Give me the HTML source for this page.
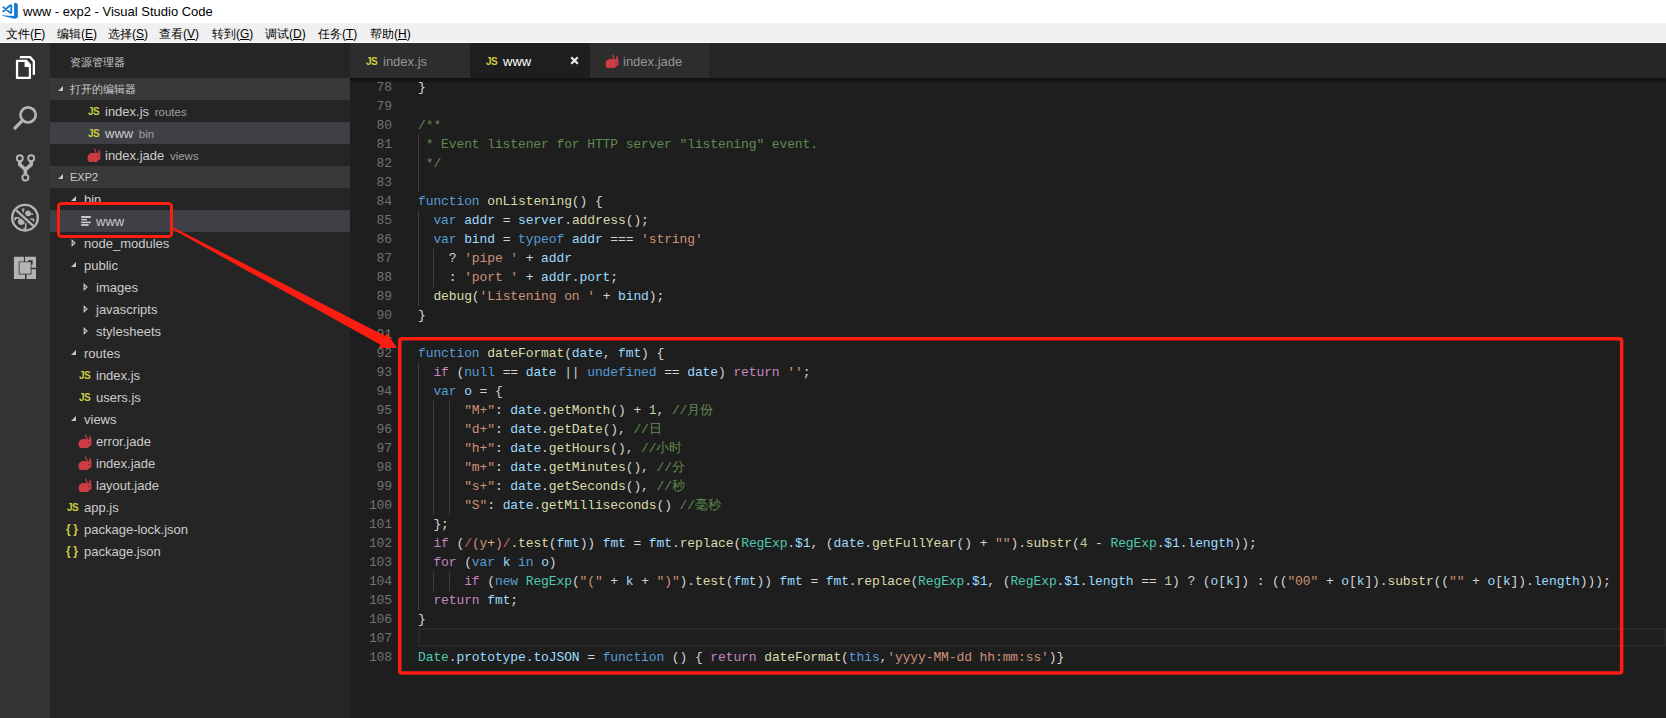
<!DOCTYPE html>
<html><head><meta charset="utf-8">
<style>
*{box-sizing:border-box;margin:0;padding:0}
html,body{width:1666px;height:718px;overflow:hidden;background:#1e1e1e;font-family:"Liberation Sans",sans-serif}
.a{position:absolute}
#title{left:0;top:0;width:1666px;height:23px;background:#fff}
#ttext{left:23px;top:4px;font-size:13px;color:#000;white-space:nowrap}
#menu{left:0;top:23px;width:1666px;height:19px;background:#f0f0f0}
#sep{left:0;top:42px;height:1px;background:#fff;width:1666px}
.mi{top:3px;font-size:12px;color:#000;white-space:nowrap}
.mi u{text-decoration:underline}
#act{left:0;top:43px;width:50px;height:675px;background:#333333}
#side{left:50px;top:43px;width:300px;height:675px;background:#252526;color:#cccccc;font-size:13px}
#tabs{left:350px;top:43px;width:1316px;height:35px;background:#252526}
#editor{left:350px;top:78px;width:1316px;height:640px;background:#1e1e1e}
.row{position:absolute;left:0;width:300px;height:22px;line-height:22px;white-space:nowrap}
.row .tx{position:absolute;top:1px}
.sel{background:#3f3f46}
.hdr{background:#383838;font-size:11px}
.desc{color:#a0a0a0;font-size:11.5px;margin-left:2px}
.js{position:absolute;top:1px;font-weight:bold;font-size:10px;color:#cbcb41;letter-spacing:-0.6px}
.tri{position:absolute;top:8px;width:0;height:0}
.tab{position:absolute;top:0;width:120px;height:35px;line-height:35px;font-size:13px;white-space:nowrap}
.bun{position:absolute;top:0}
.fic{position:absolute;top:0}
.otr{position:absolute;top:6px}
.br{position:absolute;top:-0.5px;font-weight:bold;font-size:12px;color:#cbcb41;letter-spacing:-0.4px}
.ln{position:absolute;left:0;width:42px;height:19px;line-height:19px;text-align:right;color:#727272;font-family:"Liberation Mono",monospace;font-size:13px;letter-spacing:-0.11px}
.cl{position:absolute;left:68px;height:19px;line-height:19px;white-space:pre;color:#d4d4d4;font-family:"Liberation Mono",monospace;font-size:13px;letter-spacing:-0.11px}
.gd{position:absolute;width:1px;background:#404040}
.curl{position:absolute;left:68px;width:1248px;height:19px;border:2px solid #282828}
.k{color:#569cd6}.c{color:#c586c0}.f{color:#dcdcaa}.v{color:#9cdcfe}.s{color:#ce9178}.cm{color:#608b4e}.n{color:#b5cea8}.t{color:#4ec9b0}.r{color:#d16969}.rx{color:#d7ba7d}
.shd{position:absolute;left:0;top:0;width:1316px;height:6px;background:linear-gradient(#0f0f0f,rgba(30,30,30,0))}
</style></head><body>
<div id="title" class="a">
  <svg class="a" style="left:0;top:0" width="23" height="23" viewBox="0 0 23 23">
    <path d="M14.1 3.1 L15.6 3.1 L17.8 4.1 L17.8 17.4 L14.6 18.8 L13.2 18.6 L2.2 15.8 L2.1 15.2 L14.1 16 Z" fill="#0f78d4"/>
    <path d="M3.3 7.1 L10.3 12.9 L11.3 12.6 L11.3 5.6 L10.3 5.3 L3.3 11.3" fill="none" stroke="#0f78d4" stroke-width="1.8" stroke-linejoin="round" stroke-linecap="round"/>
  </svg>
  <div id="ttext" class="a">www - exp2 - Visual Studio Code</div>
</div>
<div id="menu" class="a">
  <div class="a mi" style="left:6px">文件(<u>F</u>)</div>
  <div class="a mi" style="left:57px">编辑(<u>E</u>)</div>
  <div class="a mi" style="left:108px">选择(<u>S</u>)</div>
  <div class="a mi" style="left:159px">查看(<u>V</u>)</div>
  <div class="a mi" style="left:212px">转到(<u>G</u>)</div>
  <div class="a mi" style="left:265px">调试(<u>D</u>)</div>
  <div class="a mi" style="left:318px">任务(<u>T</u>)</div>
  <div class="a mi" style="left:370px">帮助(<u>H</u>)</div>
</div>
<div id="sep" class="a"></div>
<div id="act" class="a"></div>
<svg class="a" style="left:0;top:0" width="50" height="718" viewBox="0 0 50 718">
  <path fill="#ffffff" fill-rule="evenodd" d="M16.9 59.8 L26.8 59.8 L31 64.6 L31 78 Q31 79 30 79 L16.9 79 Q15.9 79 15.9 78 L15.9 60.8 Q15.9 59.8 16.9 59.8 Z M18.2 62 L24.6 62 L24.6 67.1 L28.8 67.1 L28.8 76.8 L18.2 76.8 Z"/>
  <path fill="#ffffff" d="M20.8 56 L30.7 56 L35 60.9 L35 74 Q35 75 34 75 L32.7 75 L32.7 61.8 L29.6 58.2 L19.8 58.2 L19.8 57 Q19.8 56 20.8 56 Z"/>
  <g stroke="#b4b4b4" fill="none">
    <circle cx="28.1" cy="114.9" r="7.6" stroke-width="2.7"/>
    <path d="M22.6 120.4 L15 128" stroke-width="3.2" stroke-linecap="round"/>
    <circle cx="19.8" cy="158.3" r="3" stroke-width="1.9"/>
    <circle cx="31.2" cy="158.3" r="3" stroke-width="1.9"/>
    <circle cx="25.4" cy="177.6" r="3" stroke-width="1.9"/>
    <path d="M19.8 161.2 L19.8 164.6 L25.4 169.5 L31.2 164.6 L31.2 161.2 M25.4 169 L25.4 174.6" stroke-width="3.6" stroke-linejoin="round"/>
    </g>
  <g fill="#b4b4b4">
    <circle cx="28" cy="213.4" r="2.9"/>
    <circle cx="21.3" cy="221.6" r="3.4"/>
  </g>
  <path d="M23 209.2 L23 212.5 M21.8 209.4 L24.5 209.4 M30.2 214 L33.3 214 M28 219.2 L33.5 219.2 L33.5 221.8 M14.5 217.9 L19.5 217.9 M15.2 217.9 L15.2 220.5 M25.7 222.5 L25.7 228.5 L23.5 228.5" stroke="#b4b4b4" stroke-width="1.6" fill="none"/>
  <path d="M16.3 210.3 L33.6 226.1" stroke="#333333" stroke-width="5.6"/>
  <g stroke="#b4b4b4" fill="none">
  <circle cx="25" cy="217.7" r="12.8" stroke-width="2.4"/>
  <path d="M16.3 210.3 L33.6 226.1" stroke-width="2.4"/>
  </g>
  <path fill="#b4b4b4" d="M13.9 256.8 L23.9 256.8 L23.9 261.4 L18.7 261.4 L18.7 274.5 L25 274.5 L25 279 L13.9 279 Z M26.5 274.5 L31.5 274.5 L31.5 269.3 L36 269.3 L36 279 L26.5 279 Z M25 256.8 L36 256.8 L36 267.8 L31.5 267.8 L31.5 264.6 L32.6 264.6 L32.6 260.2 L28.2 260.2 L28.2 261.4 L25 261.4 Z"/>
  <rect x="19.5" y="262.2" width="11.2" height="11.5" fill="#b4b4b4"/>
</svg>
<div id="side" class="a">
  <div class="a" style="left:20px;top:12px;font-size:11px;color:#c8c8c8;white-space:nowrap">资源管理器</div>
  <div class="row hdr" style="top:35px"><span class="tri" style="left:8px;top:8px;border-left:5px solid transparent;border-bottom:5px solid #c5c5c5"></span><span class="tx" style="left:20px;top:-0.5px">打开的编辑器</span></div>
  <div class="row" style="top:57px"><span class="js" style="left:38px">JS</span><span class="tx" style="left:55px">index.js <span class="desc">routes</span></span></div>
  <div class="row sel" style="top:79px"><span class="js" style="left:38px">JS</span><span class="tx" style="left:55px">www <span class="desc">bin</span></span></div>
  <div class="row" style="top:101px"><svg class="bun" style="left:34px" width="20" height="22" viewBox="0 0 20 22"><path d="M3.6 13.6 C3.6 11 5.5 8.9 8.5 8.9 L11.6 9.2 L10 5 C9.9 4.3 10.6 4 11 4.5 L12.9 9.3 L14.2 9.6 L14.3 6.6 C14.4 6 15.6 6 15.8 6.6 L16.3 10.6 C16.6 11.5 16.6 14 16.2 15 C15.5 16 14.8 16.2 14 16.3 L13 18.1 L9.6 18.1 L9 17.5 L8.4 18.1 L5.3 18.1 C4.3 17.5 3.8 16.5 3.9 15.5 L3.4 14.6 Z" fill="#cc3e44"/><ellipse cx="14.1" cy="12.4" rx="0.75" ry="0.5" fill="#5a1a1c"/></svg><span class="tx" style="left:55px">index.jade <span class="desc">views</span></span></div>
  <div class="row hdr" style="top:123px"><span class="tri" style="left:8px;top:8px;border-left:5px solid transparent;border-bottom:5px solid #c5c5c5"></span><span class="tx" style="left:20px;top:0">EXP2</span></div>
  <div class="row" style="top:145px"><span class="tri" style="left:21px;border-left:5px solid transparent;border-bottom:5px solid #c5c5c5"></span><span class="tx" style="left:34px">bin</span></div>
  <div class="row sel" style="top:167px"><svg class="fic" style="left:31px" width="11" height="22" viewBox="0 0 11 22"><rect x="0.2" y="6" width="9.6" height="2" fill="#c8c8c8"/><rect x="0.2" y="8.9" width="5.8" height="1.5" fill="#c8c8c8"/><rect x="0.2" y="11.6" width="9.6" height="1.6" fill="#c8c8c8"/><rect x="0.2" y="14" width="7.4" height="2" fill="#c0c0c0"/></svg><span class="tx" style="left:46px">www</span></div>
  <div class="row" style="top:189px"><svg class="otr" style="left:21px" width="6" height="10" viewBox="0 0 6 10"><path d="M0.6 1.1 L4.9 5 L0.6 8.9 Z M1.8 3.7 L3.2 5 L1.8 6.3 Z" fill="#c8c8c8" fill-rule="evenodd"/></svg><span class="tx" style="left:34px">node_modules</span></div>
  <div class="row" style="top:211px"><span class="tri" style="left:21px;border-left:5px solid transparent;border-bottom:5px solid #c5c5c5"></span><span class="tx" style="left:34px">public</span></div>
  <div class="row" style="top:233px"><svg class="otr" style="left:33px" width="6" height="10" viewBox="0 0 6 10"><path d="M0.6 1.1 L4.9 5 L0.6 8.9 Z M1.8 3.7 L3.2 5 L1.8 6.3 Z" fill="#c8c8c8" fill-rule="evenodd"/></svg><span class="tx" style="left:46px">images</span></div>
  <div class="row" style="top:255px"><svg class="otr" style="left:33px" width="6" height="10" viewBox="0 0 6 10"><path d="M0.6 1.1 L4.9 5 L0.6 8.9 Z M1.8 3.7 L3.2 5 L1.8 6.3 Z" fill="#c8c8c8" fill-rule="evenodd"/></svg><span class="tx" style="left:46px">javascripts</span></div>
  <div class="row" style="top:277px"><svg class="otr" style="left:33px" width="6" height="10" viewBox="0 0 6 10"><path d="M0.6 1.1 L4.9 5 L0.6 8.9 Z M1.8 3.7 L3.2 5 L1.8 6.3 Z" fill="#c8c8c8" fill-rule="evenodd"/></svg><span class="tx" style="left:46px">stylesheets</span></div>
  <div class="row" style="top:299px"><span class="tri" style="left:21px;border-left:5px solid transparent;border-bottom:5px solid #c5c5c5"></span><span class="tx" style="left:34px">routes</span></div>
  <div class="row" style="top:321px"><span class="js" style="left:29px">JS</span><span class="tx" style="left:46px">index.js</span></div>
  <div class="row" style="top:343px"><span class="js" style="left:29px">JS</span><span class="tx" style="left:46px">users.js</span></div>
  <div class="row" style="top:365px"><span class="tri" style="left:21px;border-left:5px solid transparent;border-bottom:5px solid #c5c5c5"></span><span class="tx" style="left:34px">views</span></div>
  <div class="row" style="top:387px"><svg class="bun" style="left:25px" width="20" height="22" viewBox="0 0 20 22"><path d="M3.6 13.6 C3.6 11 5.5 8.9 8.5 8.9 L11.6 9.2 L10 5 C9.9 4.3 10.6 4 11 4.5 L12.9 9.3 L14.2 9.6 L14.3 6.6 C14.4 6 15.6 6 15.8 6.6 L16.3 10.6 C16.6 11.5 16.6 14 16.2 15 C15.5 16 14.8 16.2 14 16.3 L13 18.1 L9.6 18.1 L9 17.5 L8.4 18.1 L5.3 18.1 C4.3 17.5 3.8 16.5 3.9 15.5 L3.4 14.6 Z" fill="#cc3e44"/><ellipse cx="14.1" cy="12.4" rx="0.75" ry="0.5" fill="#5a1a1c"/></svg><span class="tx" style="left:46px">error.jade</span></div>
  <div class="row" style="top:409px"><svg class="bun" style="left:25px" width="20" height="22" viewBox="0 0 20 22"><path d="M3.6 13.6 C3.6 11 5.5 8.9 8.5 8.9 L11.6 9.2 L10 5 C9.9 4.3 10.6 4 11 4.5 L12.9 9.3 L14.2 9.6 L14.3 6.6 C14.4 6 15.6 6 15.8 6.6 L16.3 10.6 C16.6 11.5 16.6 14 16.2 15 C15.5 16 14.8 16.2 14 16.3 L13 18.1 L9.6 18.1 L9 17.5 L8.4 18.1 L5.3 18.1 C4.3 17.5 3.8 16.5 3.9 15.5 L3.4 14.6 Z" fill="#cc3e44"/><ellipse cx="14.1" cy="12.4" rx="0.75" ry="0.5" fill="#5a1a1c"/></svg><span class="tx" style="left:46px">index.jade</span></div>
  <div class="row" style="top:431px"><svg class="bun" style="left:25px" width="20" height="22" viewBox="0 0 20 22"><path d="M3.6 13.6 C3.6 11 5.5 8.9 8.5 8.9 L11.6 9.2 L10 5 C9.9 4.3 10.6 4 11 4.5 L12.9 9.3 L14.2 9.6 L14.3 6.6 C14.4 6 15.6 6 15.8 6.6 L16.3 10.6 C16.6 11.5 16.6 14 16.2 15 C15.5 16 14.8 16.2 14 16.3 L13 18.1 L9.6 18.1 L9 17.5 L8.4 18.1 L5.3 18.1 C4.3 17.5 3.8 16.5 3.9 15.5 L3.4 14.6 Z" fill="#cc3e44"/><ellipse cx="14.1" cy="12.4" rx="0.75" ry="0.5" fill="#5a1a1c"/></svg><span class="tx" style="left:46px">layout.jade</span></div>
  <div class="row" style="top:453px"><span class="js" style="left:17px">JS</span><span class="tx" style="left:34px">app.js</span></div>
  <div class="row" style="top:475px"><span class="br" style="left:16px">{ }</span><span class="tx" style="left:34px">package-lock.json</span></div>
  <div class="row" style="top:497px"><span class="br" style="left:16px">{ }</span><span class="tx" style="left:34px">package.json</span></div>
</div>
<div id="tabs" class="a">
  <div class="tab" style="left:0;background:#2d2d2d;color:#969696"><span class="js" style="left:16px;top:1px;line-height:35px">JS</span><span class="a" style="left:33px;top:1px">index.js</span></div>
  <div class="tab" style="left:120px;background:#1e1e1e;color:#ffffff"><span class="js" style="left:16px;top:1px;line-height:35px">JS</span><span class="a" style="left:33px;top:1px">www</span><svg class="a" style="left:100.4px;top:13.4px" width="9" height="9" viewBox="0 0 9 9"><path d="M1.2 1.2 L7.8 7.8 M7.8 1.2 L1.2 7.8" stroke="#e8e8e8" stroke-width="2.3"/></svg></div>
  <div class="tab" style="left:240px;width:119px;background:#2d2d2d;color:#969696"><svg class="a" style="left:11.5px;top:7px" width="20" height="22" viewBox="0 0 20 22"><path d="M3.6 13.6 C3.6 11 5.5 8.9 8.5 8.9 L11.6 9.2 L10 5 C9.9 4.3 10.6 4 11 4.5 L12.9 9.3 L14.2 9.6 L14.3 6.6 C14.4 6 15.6 6 15.8 6.6 L16.3 10.6 C16.6 11.5 16.6 14 16.2 15 C15.5 16 14.8 16.2 14 16.3 L13 18.1 L9.6 18.1 L9 17.5 L8.4 18.1 L5.3 18.1 C4.3 17.5 3.8 16.5 3.9 15.5 L3.4 14.6 Z" fill="#cc3e44"/><ellipse cx="14.1" cy="12.4" rx="0.75" ry="0.5" fill="#5a1a1c"/></svg><span class="a" style="left:33px;top:1px">index.jade</span></div>
</div>
<div id="editor" class="a"><div class="shd"></div><div class="curl" style="top:550px"></div><div class="gd" style="left:68px;top:57px;height:57px"></div><div class="gd" style="left:68px;top:133px;height:95px"></div><div class="gd" style="left:83px;top:171px;height:38px"></div><div class="gd" style="left:68px;top:285px;height:247px"></div><div class="gd" style="left:83px;top:323px;height:114px"></div><div class="gd" style="left:99px;top:323px;height:114px"></div><div class="gd" style="left:83px;top:494px;height:19px"></div><div class="gd" style="left:99px;top:494px;height:19px"></div><div class="ln" style="top:0px">78</div><div class="cl" style="top:0px">}</div>
<div class="ln" style="top:19px">79</div><div class="cl" style="top:19px"></div>
<div class="ln" style="top:38px">80</div><div class="cl" style="top:38px"><span class="cm">/**</span></div>
<div class="ln" style="top:57px">81</div><div class="cl" style="top:57px"><span class="cm"> * Event listener for HTTP server &quot;listening&quot; event.</span></div>
<div class="ln" style="top:76px">82</div><div class="cl" style="top:76px"><span class="cm"> */</span></div>
<div class="ln" style="top:95px">83</div><div class="cl" style="top:95px"></div>
<div class="ln" style="top:114px">84</div><div class="cl" style="top:114px"><span class="k">function</span> <span class="f">onListening</span>() {</div>
<div class="ln" style="top:133px">85</div><div class="cl" style="top:133px">  <span class="k">var</span> <span class="v">addr</span> = <span class="v">server</span>.<span class="f">address</span>();</div>
<div class="ln" style="top:152px">86</div><div class="cl" style="top:152px">  <span class="k">var</span> <span class="v">bind</span> = <span class="k">typeof</span> <span class="v">addr</span> === <span class="s">&#x27;string&#x27;</span></div>
<div class="ln" style="top:171px">87</div><div class="cl" style="top:171px">    ? <span class="s">&#x27;pipe &#x27;</span> + <span class="v">addr</span></div>
<div class="ln" style="top:190px">88</div><div class="cl" style="top:190px">    : <span class="s">&#x27;port &#x27;</span> + <span class="v">addr</span>.<span class="v">port</span>;</div>
<div class="ln" style="top:209px">89</div><div class="cl" style="top:209px">  <span class="f">debug</span>(<span class="s">&#x27;Listening on &#x27;</span> + <span class="v">bind</span>);</div>
<div class="ln" style="top:228px">90</div><div class="cl" style="top:228px">}</div>
<div class="ln" style="top:247px">91</div><div class="cl" style="top:247px"></div>
<div class="ln" style="top:266px">92</div><div class="cl" style="top:266px"><span class="k">function</span> <span class="f">dateFormat</span>(<span class="v">date</span>, <span class="v">fmt</span>) {</div>
<div class="ln" style="top:285px">93</div><div class="cl" style="top:285px">  <span class="c">if</span> (<span class="k">null</span> == <span class="v">date</span> || <span class="k">undefined</span> == <span class="v">date</span>) <span class="c">return</span> <span class="s">&#x27;&#x27;</span>;</div>
<div class="ln" style="top:304px">94</div><div class="cl" style="top:304px">  <span class="k">var</span> <span class="v">o</span> = {</div>
<div class="ln" style="top:323px">95</div><div class="cl" style="top:323px">      <span class="s">&quot;M+&quot;</span>: <span class="v">date</span>.<span class="f">getMonth</span>() + <span class="n">1</span>, <span class="cm">//月份</span></div>
<div class="ln" style="top:342px">96</div><div class="cl" style="top:342px">      <span class="s">&quot;d+&quot;</span>: <span class="v">date</span>.<span class="f">getDate</span>(), <span class="cm">//日</span></div>
<div class="ln" style="top:361px">97</div><div class="cl" style="top:361px">      <span class="s">&quot;h+&quot;</span>: <span class="v">date</span>.<span class="f">getHours</span>(), <span class="cm">//小时</span></div>
<div class="ln" style="top:380px">98</div><div class="cl" style="top:380px">      <span class="s">&quot;m+&quot;</span>: <span class="v">date</span>.<span class="f">getMinutes</span>(), <span class="cm">//分</span></div>
<div class="ln" style="top:399px">99</div><div class="cl" style="top:399px">      <span class="s">&quot;s+&quot;</span>: <span class="v">date</span>.<span class="f">getSeconds</span>(), <span class="cm">//秒</span></div>
<div class="ln" style="top:418px">100</div><div class="cl" style="top:418px">      <span class="s">&quot;S&quot;</span>: <span class="v">date</span>.<span class="f">getMilliseconds</span>() <span class="cm">//毫秒</span></div>
<div class="ln" style="top:437px">101</div><div class="cl" style="top:437px">  };</div>
<div class="ln" style="top:456px">102</div><div class="cl" style="top:456px">  <span class="c">if</span> (<span class="r">/</span><span class="s">(y</span><span class="rx">+</span><span class="s">)</span><span class="r">/</span>.<span class="f">test</span>(<span class="v">fmt</span>)) <span class="v">fmt</span> = <span class="v">fmt</span>.<span class="f">replace</span>(<span class="t">RegExp</span>.<span class="v">$1</span>, (<span class="v">date</span>.<span class="f">getFullYear</span>() + <span class="s">&quot;&quot;</span>).<span class="f">substr</span>(<span class="n">4</span> - <span class="t">RegExp</span>.<span class="v">$1</span>.<span class="v">length</span>));</div>
<div class="ln" style="top:475px">103</div><div class="cl" style="top:475px">  <span class="c">for</span> (<span class="k">var</span> <span class="v">k</span> <span class="k">in</span> <span class="v">o</span>)</div>
<div class="ln" style="top:494px">104</div><div class="cl" style="top:494px">      <span class="c">if</span> (<span class="k">new</span> <span class="t">RegExp</span>(<span class="s">&quot;(&quot;</span> + <span class="v">k</span> + <span class="s">&quot;)&quot;</span>).<span class="f">test</span>(<span class="v">fmt</span>)) <span class="v">fmt</span> = <span class="v">fmt</span>.<span class="f">replace</span>(<span class="t">RegExp</span>.<span class="v">$1</span>, (<span class="t">RegExp</span>.<span class="v">$1</span>.<span class="v">length</span> == <span class="n">1</span>) ? (<span class="v">o</span>[<span class="v">k</span>]) : ((<span class="s">&quot;00&quot;</span> + <span class="v">o</span>[<span class="v">k</span>]).<span class="f">substr</span>((<span class="s">&quot;&quot;</span> + <span class="v">o</span>[<span class="v">k</span>]).<span class="v">length</span>)));</div>
<div class="ln" style="top:513px">105</div><div class="cl" style="top:513px">  <span class="c">return</span> <span class="v">fmt</span>;</div>
<div class="ln" style="top:532px">106</div><div class="cl" style="top:532px">}</div>
<div class="ln" style="top:551px">107</div><div class="cl" style="top:551px"></div>
<div class="ln" style="top:570px">108</div><div class="cl" style="top:570px"><span class="t">Date</span>.<span class="v">prototype</span>.<span class="v">toJSON</span> = <span class="k">function</span> () { <span class="c">return</span> <span class="f">dateFormat</span>(<span class="k">this</span>,<span class="s">&#x27;yyyy-MM-dd hh:mm:ss&#x27;</span>)}</div></div>
<svg class="a" style="left:0;top:0;pointer-events:none" width="1666" height="718" viewBox="0 0 1666 718">
  <rect x="58.5" y="203.5" width="113" height="33" rx="3" ry="3" fill="none" stroke="#fb1c12" stroke-width="3"/>
  <rect x="399.75" y="338.75" width="1221.9" height="334.2" rx="2" ry="2" fill="none" stroke="#fb1c12" stroke-width="3.5"/>
  <polygon fill="#fb1c12" points="172.53,229.28 380.53,344.79 378.88,347.88 397,347.9 386.88,332.88 385.23,335.97 173.47,227.52"/>
</svg>
</body></html>
